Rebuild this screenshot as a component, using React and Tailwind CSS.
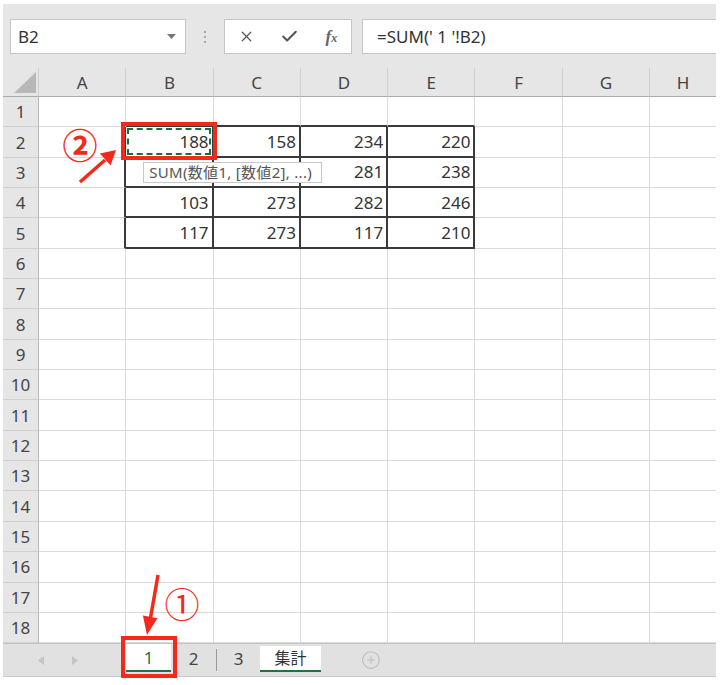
// Excel sheet screenshot: formula bar, grid, sheet tabs + red annotations

import { X, Check, CirclePlus } from "lucide-react";

const COLS = ["A", "B", "C", "D", "E", "F", "G", "H"];
const ROWS = Array.from({ length: 18 }, (_, i) => i + 1);

const DATA = {
  2: ["188", "158", "234", "220"],
  3: ["", "", "281", "238"],
  4: ["103", "273", "282", "246"],
  5: ["117", "273", "117", "210"],
};

function cellClass(r, c) {
  const inData = r >= 2 && r <= 5 && c >= 1 && c <= 4;
  const leftOfData = r >= 2 && r <= 5 && c === 0;
  const aboveData = r === 1 && c >= 1 && c <= 4;
  if (inData) return "relative bg-white border-r-2 border-b-2 border-[#3a3a3a]";
  if (leftOfData) return "relative bg-white border-b border-b-[#dadada] border-r-2 border-r-[#3a3a3a]";
  if (aboveData) return "relative bg-white border-r border-r-[#dadada] border-b-2 border-b-[#3a3a3a]";
  if (c === 7) return "relative bg-white border-b border-[#dadada]";
  return "relative bg-white border-r border-b border-[#dadada]";
}

function Cell({ r, c }) {
  const value = DATA[r] && c >= 1 && c <= 4 ? DATA[r][c - 1] : "";
  return (
    <div className={cellClass(r, c)}>
      <div className="h-full flex items-center justify-end pr-[3px] text-[17px] text-[#333] leading-none">
        {value}
      </div>
      {r === 2 && c === 1 && (
        <>
          <div className="absolute inset-[1px] border-2 border-dashed border-[#1e6b41]" />
          <div className="absolute -left-[5px] -right-[5px] -top-[5px] -bottom-[4px] border-4 border-[#f2291b] z-10" />
        </>
      )}
      {r === 3 && c === 1 && (
        <div className="absolute left-[17px] top-[4px] w-[179px] h-[21px] bg-white border border-[#c8c8c8] z-20 flex items-center pl-[5px] text-[15px] tracking-[0.3px] text-[#555] whitespace-nowrap leading-none">
          SUM(数値1, [数値2], ...)
        </div>
      )}
    </div>
  );
}

function Toolbar() {
  return (
    <div className="h-[64px] bg-[#e6e6e6] flex items-start pt-[15px] pl-[7px]">
      <div className="w-[176px] h-[35px] bg-white border border-[#c6c6c6] flex items-center justify-between pl-[7px] pr-[9px]">
        <span className="text-[17px] text-[#333] leading-none">B2</span>
        <svg width="9" height="5" viewBox="0 0 9 5">
          <polygon points="0,0 9,0 4.5,5" fill="#777" />
        </svg>
      </div>
      <div className="w-[38px] h-[35px] flex flex-col items-center justify-center gap-[3px]">
        <span className="w-[2px] h-[2px] bg-[#a8a8a8]" />
        <span className="w-[2px] h-[2px] bg-[#a8a8a8]" />
        <span className="w-[2px] h-[2px] bg-[#a8a8a8]" />
      </div>
      <div className="w-[128px] h-[35px] bg-white border border-[#c6c6c6] flex items-center">
        <div className="w-[44px] flex justify-center">
          <X size={17} strokeWidth={1.8} color="#555" />
        </div>
        <div className="w-[44px] flex justify-center">
          <Check size={19} strokeWidth={2.6} color="#555" />
        </div>
        <div className="w-[40px] flex justify-center">
          <span className="font-['Liberation_Serif',serif] italic font-bold text-[17px] text-[#666] leading-none">
            f<span className="text-[12px]">x</span>
          </span>
        </div>
      </div>
      <div className="ml-[10px] flex-1 h-[35px] bg-white border border-r-0 border-[#c6c6c6] flex items-center pl-[14px]">
        <span className="text-[17px] text-[#333] leading-none">=SUM(' 1 '!B2)</span>
      </div>
    </div>
  );
}

function Grid() {
  return (
    <div className="grid grid-cols-[36px_repeat(7,87.3px)_1fr] grid-rows-[29px_repeat(18,30.35px)]">
      <div className="bg-[#e6e6e6] border-r border-r-[#d0d0d0] border-b border-b-[#ababab] relative">
        <svg className="absolute right-[2px] bottom-[3px]" width="22" height="21" viewBox="0 0 22 21">
          <polygon points="0,21 22,21 22,0" fill="#b8b8b8" />
        </svg>
      </div>
      {COLS.map((col, i) => (
        <div
          key={col}
          className={
            i === 7
              ? "bg-[#e6e6e6] border-b border-[#ababab] flex items-center justify-center text-[17px] text-[#444] leading-none"
              : "bg-[#e6e6e6] border-r border-r-[#d0d0d0] border-b border-b-[#ababab] flex items-center justify-center text-[17px] text-[#444] leading-none"
          }
        >
          {col}
        </div>
      ))}
      {ROWS.map((r) => (
        <div key={r} className="contents">
          <div className="bg-[#e6e6e6] border-r border-r-[#b9b9b9] border-b border-b-[#d0d0d0] flex items-center justify-center text-[17px] text-[#444] leading-none">
            {r}
          </div>
          {COLS.map((col, c) => (
            <Cell key={col} r={r} c={c} />
          ))}
        </div>
      ))}
    </div>
  );
}

function SheetTabs() {
  return (
    <div className="h-[34px] bg-[#e1e1e1] border-t border-[#c4c4c4] border-b border-b-[#c9c9c9] flex items-start">
      <div className="w-[123px] h-full flex items-center pl-[35px] gap-[28px]">
        <svg width="6" height="9" viewBox="0 0 6 9">
          <polygon points="6,0 6,9 0,4.5" fill="#c4c4c4" />
        </svg>
        <svg width="6" height="9" viewBox="0 0 6 9">
          <polygon points="0,0 0,9 6,4.5" fill="#c4c4c4" />
        </svg>
      </div>
      <div className="w-[45px] h-[28px] bg-white border-b-2 border-[#217346] flex items-center justify-center text-[17px] text-[#217346] leading-none">
        1
      </div>
      <div className="w-[45px] h-[28px] flex items-center justify-center text-[17px] text-[#444] leading-none">2</div>
      <div className="w-px h-[22px] mt-[5px] bg-[#9a9a9a]" />
      <div className="w-[43px] h-[28px] flex items-center justify-center text-[17px] text-[#444] leading-none">3</div>
      <div className="w-[61px] h-[26px] mt-[2px] bg-white border-b-2 border-[#217346] flex items-center justify-center text-[16px] text-[#333] leading-none">
        集計
      </div>
      <div className="ml-[40px] h-full flex items-center">
        <CirclePlus size={20} strokeWidth={1.3} color="#bdbdbd" />
      </div>
    </div>
  );
}

export default function App() {
  return (
    <div className="relative w-[722px] h-[685px] bg-white overflow-hidden pt-[4px] pl-[3px] font-['Noto_Sans','Noto_Sans_CJK_JP',sans-serif]">
      <div className="w-[713px] flex flex-col">
        <Toolbar />
        <Grid />
        <SheetTabs />
      </div>

      {/* annotations */}
      <div className="absolute left-[121px] top-[636px] w-[56px] h-[42px] border-4 border-[#f2291b]" />
      <div className="absolute left-[62px] top-[127px] w-[36px] h-[32px] flex items-center justify-center text-[35px] font-bold text-[#f2291b] leading-none font-['Noto_Sans_CJK_JP',sans-serif]">
        ②
      </div>
      <div className="absolute left-[163px] top-[586px] w-[38px] h-[32px] flex items-center justify-center text-[35px] text-[#f2291b] leading-none font-['Noto_Sans_CJK_JP',sans-serif]">
        ①
      </div>
      <svg className="absolute left-0 top-0 pointer-events-none" width="722" height="685" viewBox="0 0 722 685">
        <line x1="80" y1="182" x2="105" y2="160" stroke="#f2291b" strokeWidth="3.5" />
        <polygon points="116,150 110.6,165.5 99.9,153.6" fill="#f2291b" />
        <line x1="158" y1="575" x2="150.5" y2="618" stroke="#f2291b" strokeWidth="3.5" />
        <polygon points="147,635 157.4,618.2 142.9,615.6" fill="#f2291b" />
      </svg>
    </div>
  );
}
